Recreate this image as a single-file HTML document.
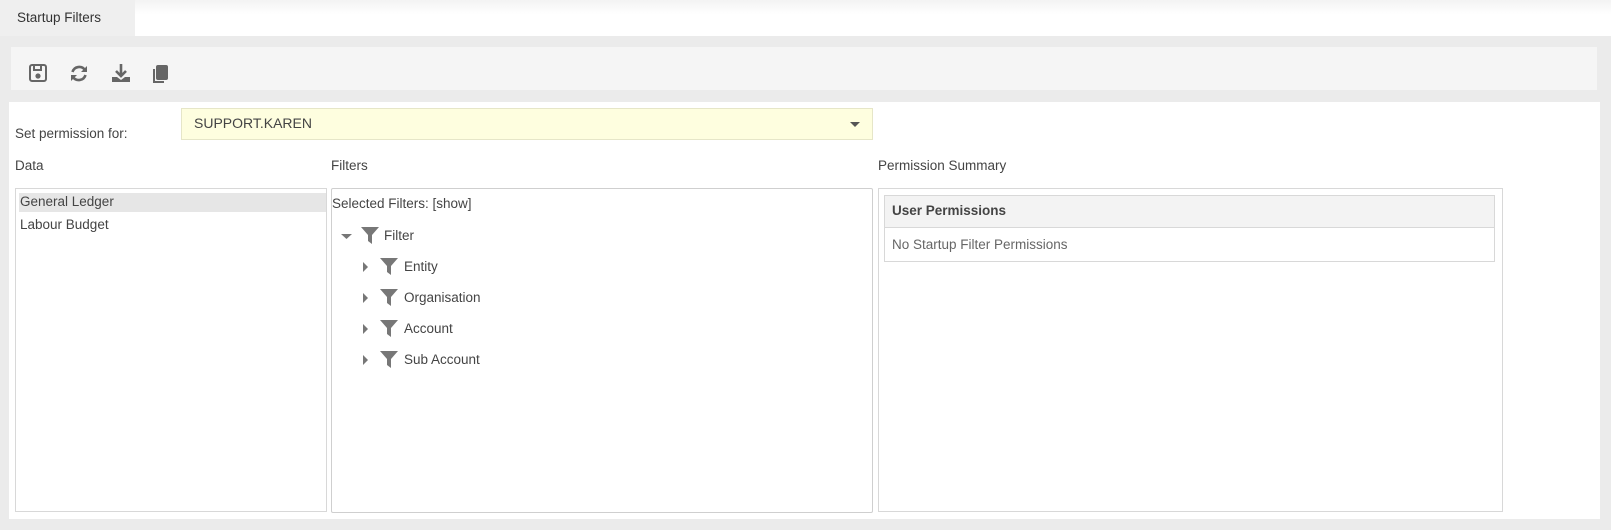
<!DOCTYPE html>
<html><head><style>
*{box-sizing:border-box;margin:0;padding:0}
body{width:1611px;height:530px;background:#ebebeb;font-family:"Liberation Sans",sans-serif;font-size:13.5px;color:#444;position:relative;overflow:hidden}
.a{position:absolute}
.t{position:absolute;white-space:nowrap;line-height:16px}
</style></head><body>
<div class="a" style="left:0;top:0;width:1611px;height:36px;background:linear-gradient(#f3f3f3,#fff 40%)"></div>
<div class="a" style="left:0;top:0;width:135px;height:36px;background:#efefef"></div>
<div class="t" style="left:17px;top:10px;color:#333">Startup Filters</div>
<div class="a" style="left:11px;top:47px;width:1586px;height:43px;background:#f5f5f5"></div>
<svg class="a" style="left:28px;top:63px" width="150" height="22" viewBox="0 0 150 22" fill="none" stroke="#666" stroke-width="2">
<rect x="2" y="2" width="16" height="16" rx="2"/><path d="M6 2v5h7V2"/><circle cx="10" cy="13" r="1.6" fill="#666"/>
<path d="M44.5 9A7 7 0 0 1 57 7" stroke-width="2.6"/><path d="M59 3v6h-6z" fill="#666" stroke="none"/>
<path d="M57.5 12A7 7 0 0 1 45 14" stroke-width="2.6"/><path d="M43 18v-6h6z" fill="#666" stroke="none"/>
<path d="M93 1v11M88 8l5 5 5-5" stroke-width="2.6"/><path d="M84 14h5l4 3 4-3h5v5H84z" fill="#666" stroke="none"/>
<rect x="128" y="2" width="12" height="15" rx="2" fill="#666" stroke="none"/><path d="M126 6v13h10" stroke-width="2"/>
</svg>
<div class="a" style="left:9px;top:102px;width:1591px;height:417px;background:#fff"></div>
<div class="t" style="left:15px;top:126px">Set permission for:</div>
<div class="a" style="left:181px;top:108px;width:692px;height:32px;background:#fefedf;border:1px solid #e6e6c8"></div>
<div class="t" style="left:194px;top:115px;font-size:14px;color:#444">SUPPORT.KAREN</div>
<div class="a" style="left:850px;top:122px;width:0;height:0;border-left:5px solid transparent;border-right:5px solid transparent;border-top:5px solid #555"></div>
<div class="t" style="left:15px;top:158px">Data</div>
<div class="t" style="left:331px;top:158px">Filters</div>
<div class="t" style="left:878px;top:158px">Permission Summary</div>
<div class="a" style="left:15px;top:188px;width:312px;height:324px;border:1px solid #d8d8d8"></div>
<div class="a" style="left:19px;top:193px;width:307px;height:19px;background:#e6e6e6"></div>
<div class="t" style="left:20px;top:194px">General Ledger</div>
<div class="t" style="left:20px;top:217px">Labour Budget</div>
<div class="a" style="left:331px;top:188px;width:542px;height:325px;border:1px solid #cfcfcf;border-radius:2px"></div>
<div class="t" style="left:332px;top:196px">Selected Filters: [show]</div>
<svg class="a" style="left:336px;top:225px" width="80" height="150" viewBox="0 0 80 150" fill="#777">
<path d="M5 9h11l-5.5 5z"/><path d="M25 2h18l-7 8v9l-4-3v-6z"/>
<path d="M27 37v10l5-5z"/><path d="M44 33h18l-7 8v9l-4-3v-6z"/>
<path d="M27 68v10l5-5z"/><path d="M44 64h18l-7 8v9l-4-3v-6z"/>
<path d="M27 99v10l5-5z"/><path d="M44 95h18l-7 8v9l-4-3v-6z"/>
<path d="M27 130v10l5-5z"/><path d="M44 126h18l-7 8v9l-4-3v-6z"/>
</svg>
<div class="t" style="left:384px;top:228px">Filter</div>
<div class="t" style="left:404px;top:259px">Entity</div>
<div class="t" style="left:404px;top:290px">Organisation</div>
<div class="t" style="left:404px;top:321px">Account</div>
<div class="t" style="left:404px;top:352px">Sub Account</div>
<div class="a" style="left:878px;top:188px;width:625px;height:324px;border:1px solid #d8d8d8"></div>
<div class="a" style="left:884px;top:195px;width:611px;height:67px;border:1px solid #d8d8d8"></div>
<div class="a" style="left:885px;top:196px;width:609px;height:32px;background:#f3f3f3;border-bottom:1px solid #d8d8d8"></div>
<div class="t" style="left:892px;top:203px;font-weight:bold;color:#444">User Permissions</div>
<div class="t" style="left:892px;top:237px;color:#666">No Startup Filter Permissions</div>
</body></html>
